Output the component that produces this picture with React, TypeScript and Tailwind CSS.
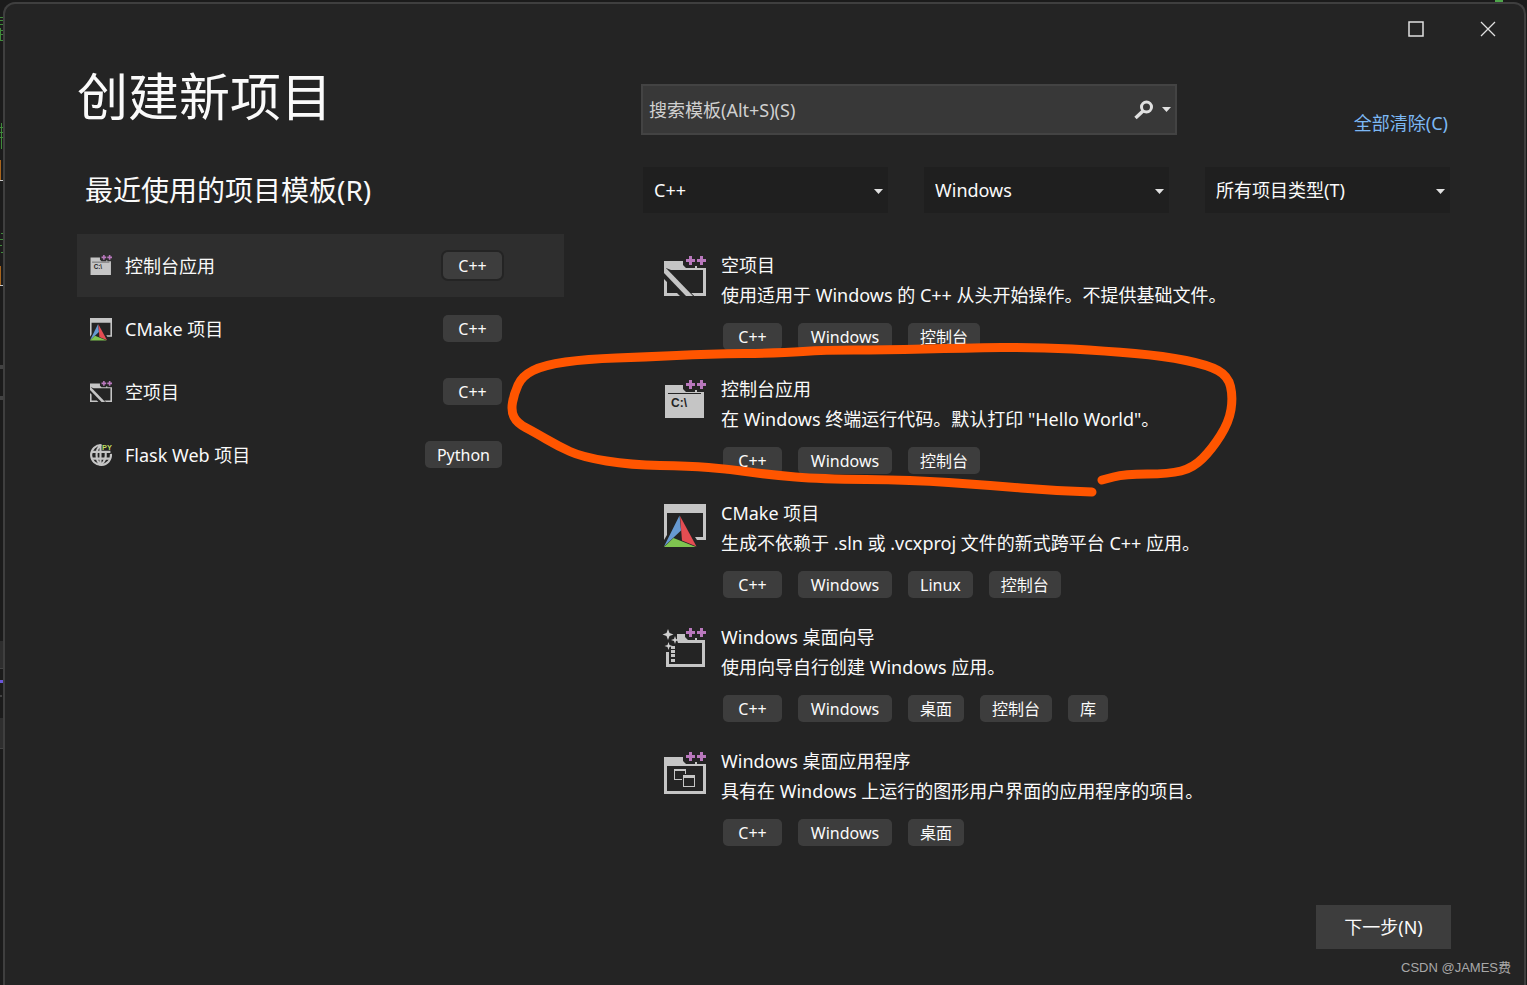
import { useState } from "react";
import type { ReactNode } from "react";

type IconName = "empty" | "console" | "cmake" | "wizard" | "desktop" | "flask";

const recent: { icon: IconName; title: string; tag: string }[] = [
  { icon: "console", title: "控制台应用", tag: "C++" },
  { icon: "cmake", title: "CMake 项目", tag: "C++" },
  { icon: "empty", title: "空项目", tag: "C++" },
  { icon: "flask", title: "Flask Web 项目", tag: "Python" },
];

const templates: { icon: IconName; title: string; text: string; tags: string[]; marked?: boolean }[] = [
  {
    icon: "empty",
    title: "空项目",
    text: "使用适用于 Windows 的 C++ 从头开始操作。不提供基础文件。",
    tags: ["C++", "Windows", "控制台"],
  },
  {
    icon: "console",
    title: "控制台应用",
    text: '在 Windows 终端运行代码。默认打印 "Hello World"。',
    tags: ["C++", "Windows", "控制台"],
    marked: true,
  },
  {
    icon: "cmake",
    title: "CMake 项目",
    text: "生成不依赖于 .sln 或 .vcxproj 文件的新式跨平台 C++ 应用。",
    tags: ["C++", "Windows", "Linux", "控制台"],
  },
  {
    icon: "wizard",
    title: "Windows 桌面向导",
    text: "使用向导自行创建 Windows 应用。",
    tags: ["C++", "Windows", "桌面", "控制台", "库"],
  },
  {
    icon: "desktop",
    title: "Windows 桌面应用程序",
    text: "具有在 Windows 上运行的图形用户界面的应用程序的项目。",
    tags: ["C++", "Windows", "桌面"],
  },
];

const filters = [
  { label: "语言", options: ["C++", "C#", "Python"] },
  { label: "平台", options: ["Windows", "Linux", "Android"] },
  { label: "项目类型", options: ["所有项目类型(T)", "控制台", "桌面"] },
];

const tagWidths: Record<string, string> = {
  "C++": "w-[59px]",
  Windows: "w-[94px]",
};

function PlusPlus() {
  return (
    <path
      fill="#b978bd"
      d="M25 0h3v3h3v3h-3v3h-3v-3h-3v-3h3zM36 0h3v3h3v3h-3v3h-3v-3h-3v-3h3z"
    />
  );
}

const drawings: Record<IconName, ReactNode> = {
  empty: (
    <>
      <path fill="#c5c5c5" d="M0 5h19v4l3 3h9v-2h2v2h9v28H30l-3-3h12V14H7l-5-2H0z" />
      <path fill="#242424" d="M0 13h2l28 27H0z" />
      <path fill="#c5c5c5" d="M0 10l29 30h-7L0 17z" />
      <path fill="#c5c5c5" d="M0 23l3 3v11h10l3 3H0z" />
      <PlusPlus />
    </>
  ),
  console: (
    <>
      <path fill="#c5c5c5" d="M1 5h18v4l3 3h9v-2h2v2h7v26H1z" />
      <path fill="#242424" d="M4 13h33v1H4z" />
      <text x="7" y="27" fill="#242424" fontSize="12" fontWeight="700" fontFamily="Liberation Sans, sans-serif">
        {"C:\\"}
      </text>
      <PlusPlus />
    </>
  ),
  cmake: (
    <>
      <path fill="#c5c5c5" d="M0 0h42v36H33l-2-3h8V9H3v22l-3 5z" />
      <path fill="#6799d1" d="M15.500 11.500L17 26.500 0 42.500z" />
      <path fill="#e44d52" d="M16 12l16.500 30.500L18 36.500z" />
      <path fill="#7fc450" d="M0 43l9.500-9L32 43z" />
    </>
  ),
  wizard: (
    <>
      <path fill="#c5c5c5" d="M13 6h8v3l3 3h7v-2h2v2h8v27H2V24h3v12h33V15H14l-1-3z" />
      <path fill="#c5c5c5" d="M7 18h4v3H7zM7 22h4v3H7zM7 26h4v3H7zM7 31h4v3H7z" />
      <path
        fill="#d0d0d0"
        d="M4 1l1.500 4 4 1.500-4 1.500-1.500 4-1.500-4-4-1.500 4-1.500zM11 8l1 3 3 1-3 1-1 3-1-3-3-1 3-1zM4.500 14l1 3 3 1-3 1-1 3-1-3-3-1 3-1z"
      />
      <PlusPlus />
    </>
  ),
  desktop: (
    <>
      <path fill="#c5c5c5" fillRule="evenodd" d="M0 5h19v4l3 3h9v-2h2v2h9v30H0zM3 14v25h36V14z" />
      <path fill="#c5c5c5" fillRule="evenodd" d="M10 17h12v11H10zM11 19v8h10v-8z" />
      <path fill="#242424" d="M18 22h13v13H18z" />
      <path fill="#c5c5c5" fillRule="evenodd" d="M19 23h12v12H19zM20 26v8h10v-8z" />
      <PlusPlus />
    </>
  ),
  flask: (
    <>
      <g fill="none" stroke="#c5c5c5" strokeWidth="4">
        <path d="M22 2A19 19 0 1 0 40 19" />
        <path d="M20 2c-10 9-10 29 0 38M20 2c0 0 0 20 0 38M20 40c9-6 11-14 10-24M3 15h36M3 28h36" />
      </g>
      <text x="23" y="11" fill="#c3de62" fontSize="14" fontWeight="700" fontFamily="Liberation Sans, sans-serif">
        PY
      </text>
    </>
  ),
};

function ProjectIcon({ name, className }: { name: IconName; className: string }) {
  return (
    <svg viewBox="0 0 42 42" className={`shrink-0 overflow-visible ${className}`} aria-hidden="true">
      {drawings[name]}
    </svg>
  );
}

function Tag({ children, outlined = false }: { children: string; outlined?: boolean }) {
  return (
    <span
      className={`flex h-[27px] items-center justify-center rounded-[5px] bg-[#3d3d3d] px-3 text-base leading-6 ${
        tagWidths[children] ?? ""
      } ${outlined ? "ring-2 ring-[#242424]" : ""}`}
    >
      {children}
    </span>
  );
}

function Caret({ className = "" }: { className?: string }) {
  return (
    <svg viewBox="0 0 9 5" className={`h-[5px] w-[9px] ${className}`} aria-hidden="true">
      <path d="M0 0h9L4.500 5z" fill="#e0e0e0" />
    </svg>
  );
}

const strokePoints = [
  [1092, 492], [1057, 491], [985, 485], [912, 480], [820, 479], [771, 475], [728, 469], [689, 466],
  [631, 465], [582, 457], [558, 446], [534, 432], [517, 423], [511, 411], [514, 394], [522, 376],
  [544, 365], [587, 359], [645, 357], [708, 354], [781, 353], [825, 350], [883, 350], [965, 348],
  [1038, 347], [1106, 351], [1164, 356], [1208, 365], [1228, 376], [1233, 397], [1229, 422],
  [1212, 449], [1193, 468], [1169, 474], [1125, 474], [1102, 480],
];

// Quadratic smoothing through the midpoints of the pen samples
function smooth(points: number[][]) {
  let d = `M${points[0][0]} ${points[0][1]}`;
  for (let i = 1; i < points.length - 1; i++) {
    const [x, y] = points[i];
    const [nx, ny] = points[i + 1];
    d += `Q${x} ${y} ${(x + nx) / 2} ${(y + ny) / 2}`;
  }
  const [lx, ly] = points[points.length - 1];
  return `${d}L${lx} ${ly}`;
}

function PenMark() {
  return (
    <svg
      viewBox="500 335 740 165"
      className="pointer-events-none absolute -top-[39px] -left-[141px] z-10 h-[165px] w-[740px]"
      aria-hidden="true"
    >
      <path d={smooth(strokePoints)} fill="none" stroke="#ff5500" strokeWidth="9" strokeLinecap="round" strokeLinejoin="round" />
    </svg>
  );
}

// The few pixels of the editor that show beside the dialog
function EditorEdge() {
  return (
    <svg viewBox="0 2 3 748" className="h-[748px] w-[3px]" aria-hidden="true">
      <path fill="#3f8a3a" d="M0 17h3v1H0zM0 20h3v1H0zM0 24h3v1H0zM0 28h1v13H0zM1 30h2v1H1zM1 34h2v1H1zM0 40h3v1H0z" />
      <path fill="#3f8a3a" d="M1 123h1v26H1zM0 127h3v1H0zM0 132h3v1H0zM0 137h3v1H0zM1 233h2v1H1zM0 239h3v1H0zM0 245h2v1H0zM1 252h2v1H1z" />
      <path fill="#a8641c" d="M0 160h1v20H0zM0 266h1v19H0z" />
      <path fill="#c8c8c8" d="M0 180h3v1H0zM0 285h3v1H0z" />
      <path fill="#424242" d="M0 365h3v4H0zM0 396h3v4H0zM0 668h3v1H0zM0 695h2v2H0zM0 748h3v1H0z" />
      <path fill="#2e2e2e" d="M0 641h3v27H0zM0 718h3v30H0z" />
      <path fill="#6a55d8" d="M0 680h3v3H0z" />
    </svg>
  );
}

export default function App() {
  const [selected, setSelected] = useState(0);

  return (
    <div className="relative flex min-h-screen bg-[#1b1b1b] pt-[2px] pr-px font-['Noto_Sans','Noto_Sans_CJK_SC',sans-serif] text-lg text-[#fafafa]">
      <span className="absolute top-0 right-[24px] h-[2px] w-2 bg-[#4ea64b]" />
      <div className="w-[3px] shrink-0">
        <EditorEdge />
      </div>
      <div className="flex flex-1 flex-col rounded-t-xl border-2 border-b-0 border-[#3f3f3f] bg-[#242424]">
        <header className="flex h-[50px] justify-end">
          <button type="button" aria-label="最大化" className="flex w-[72px] items-center justify-center">
            <svg viewBox="0 0 16 16" className="h-4 w-4">
              <path d="M1 1h14v14H1z" fill="none" stroke="#e0e0e0" strokeWidth="1.500" />
            </svg>
          </button>
          <button type="button" aria-label="关闭" className="flex w-[72px] items-center justify-center">
            <svg viewBox="0 0 16 16" className="h-4 w-4">
              <path d="M1 1l14 14M15 1L1 15" fill="none" stroke="#e0e0e0" strokeWidth="1.300" />
            </svg>
          </button>
        </header>

        <main className="flex flex-1 gap-[77px] pr-[73px] pl-[72px]">
          <section className="w-[487px] shrink-0">
            <h1 className="mt-3 text-[51px] leading-[60px]">创建新项目</h1>
            <h2 className="mt-11 pl-2 text-[28px] leading-10">最近使用的项目模板(R)</h2>
            <ul className="mt-6">
              {recent.map((item, i) => (
                <li key={item.title}>
                  <button
                    type="button"
                    onClick={() => setSelected(i)}
                    className={`flex h-[63px] w-full items-center pr-[62px] pl-[13px] text-left ${
                      selected === i ? "bg-[#2e2e2e]" : ""
                    }`}
                  >
                    <ProjectIcon name={item.icon} className="h-[22px] w-[22px]" />
                    <span className="ml-[13px] flex-1">{item.title}</span>
                    <Tag outlined={selected === i}>{item.tag}</Tag>
                  </button>
                </li>
              ))}
            </ul>
          </section>

          <section className="flex min-w-0 flex-1 flex-col pt-[30px]">
            <div className="flex items-end justify-between">
              <div className="flex h-[51px] w-[536px] items-center border-2 border-[#434343] bg-[#383838] pr-1 pl-[6px]">
                <input
                  type="text"
                  aria-label="搜索模板"
                  placeholder="搜索模板(Alt+S)(S)"
                  className="min-w-0 flex-1 bg-transparent outline-none placeholder:text-[#d0d0d0]"
                />
                <button type="button" aria-label="搜索" className="flex items-center">
                  <svg viewBox="0 0 20 20" className="h-5 w-5" fill="none" stroke="#e0e0e0">
                    <circle cx="12.500" cy="7" r="5" strokeWidth="3" />
                    <path d="M9 11L1.500 18" strokeWidth="3.500" />
                  </svg>
                </button>
                <button type="button" aria-label="搜索历史" className="ml-2 flex items-center">
                  <Caret />
                </button>
              </div>
              <a href="#clear" className="mr-[3px] leading-6 text-[#7cb8f4]">
                全部清除(C)
              </a>
            </div>

            <div className="mt-8 grid grid-cols-3 gap-9 pr-px pl-[2px]">
              {filters.map((filter) => (
                <div key={filter.label} className="relative">
                  <select
                    aria-label={filter.label}
                    className="h-[46px] w-full appearance-none bg-[#1f1f1f] pr-8 pl-[11px] outline-none"
                  >
                    {filter.options.map((option) => (
                      <option key={option}>{option}</option>
                    ))}
                  </select>
                  <Caret className="pointer-events-none absolute top-[22px] right-[5px]" />
                </div>
              ))}
            </div>

            <ul className="mt-[37px] flex flex-col gap-6">
              {templates.map((item) => (
                <li key={item.title} className="relative flex pl-[23px]">
                  <ProjectIcon name={item.icon} className="mt-[6px] h-[42px] w-[42px]" />
                  <div className="ml-[15px]">
                    <h3 className="leading-[30px]">{item.title}</h3>
                    <p className="leading-[30px]">{item.text}</p>
                    <div className="mt-[13px] ml-[2px] flex gap-4">
                      {item.tags.map((tag) => (
                        <Tag key={tag}>{tag}</Tag>
                      ))}
                    </div>
                  </div>
                  {item.marked && <PenMark />}
                </li>
              ))}
            </ul>

            <div className="mt-auto flex justify-end pb-9">
              <button type="button" className="h-11 w-[135px] bg-[#3d3d3d]">
                下一步(N)
              </button>
            </div>
          </section>
        </main>
      </div>
      <span className="absolute right-4 bottom-[7px] font-['Liberation_Sans','Noto_Sans_CJK_SC',sans-serif] text-[13px] leading-5 text-[#a8a8a8]">
        CSDN @JAMES费
      </span>
    </div>
  );
}
